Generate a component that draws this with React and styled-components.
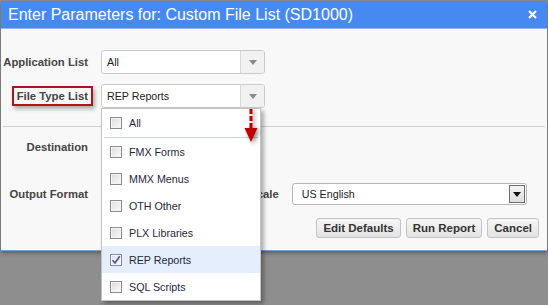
import React from 'react';
import styled, { createGlobalStyle } from 'styled-components';

const GlobalStyle = createGlobalStyle`
    html, body {
        margin: 0;
        padding: 0;
        background: #8e8e8e;
        height: 305px;
        overflow: hidden;
    }
    #root {
        padding: 1px;
        font-family: "Liberation Sans", Arial, sans-serif;
    }
`;

const Dialog = styled.div`
    width: 546px;
    background: #f8f8f8;
    border-bottom: 1px solid #7d9bd0;
    box-shadow: 0 2px 4px rgba(0, 0, 0, 0.35);
`;

const TitleBar = styled.div`
    display: flex;
    align-items: center;
    justify-content: space-between;
    height: 28px;
    padding: 0 10px 0 7px;
    background: #4689f0;
    border-bottom: 1px solid #8fb4f2;
    box-sizing: border-box;
`;

const Title = styled.span`
    color: #fff;
    font-size: 16px;
    line-height: 1;
`;

const Body = styled.div`
    padding-top: 21px;
    padding-bottom: 12px;
`;

const FieldGrid = styled.div`
    display: grid;
    grid-template-columns: 87px 1fr;
    column-gap: 13px;
    row-gap: ${p => p.$gap}px;
    grid-auto-rows: ${p => p.$row}px;
    align-items: center;
    padding-top: ${p => p.$top || 0}px;
`;

const Label = styled.div`
    justify-self: end;
    font-size: 11.3px;
    font-weight: bold;
    color: #454545;
    white-space: nowrap;
`;

const Marked = styled.span`
    display: inline-block;
    height: 16px;
    line-height: 16px;
    padding: 0 3px;
    margin-right: -5px;
    border: 2px solid #b3121c;
    box-shadow: 2px 3px 4px rgba(0, 0, 0, 0.3);
`;

const SelectWrap = styled.div`
    position: relative;
    width: ${p => p.$width}px;
    height: 24px;
`;

const SelectBox = styled.div`
    display: flex;
    height: 100%;
    box-sizing: border-box;
    border: 1px solid #cacaca;
    border-radius: 3px;
    background: #fff;
    overflow: hidden;
`;

const SelectText = styled.span`
    flex: 1;
    display: flex;
    align-items: center;
    padding-left: 5px;
    font-size: 10.7px;
    color: #222;
`;

const ArrowCell = styled.span`
    width: 23px;
    display: flex;
    align-items: center;
    justify-content: center;
    background: #f1f1f1;
    border-left: 1px solid #d8d8d8;
`;

const Caret = styled.span`
    width: 0;
    height: 0;
    border-left: 4px solid transparent;
    border-right: 4px solid transparent;
    border-top: 5px solid ${p => p.$color || '#8a8a8a'};
`;

const Menu = styled.div`
    position: absolute;
    top: 100%;
    left: 0;
    width: 160px;
    box-sizing: border-box;
    background: #fff;
    border: 1px solid #c4c4c4;
    box-shadow: 3px 3px 4px rgba(0, 0, 0, 0.3);
    z-index: 10;
`;

const MenuItem = styled.div`
    display: flex;
    align-items: center;
    gap: 7px;
    height: ${p => p.$h || 27}px;
    padding-left: 8px;
    background: ${p => (p.$active ? '#e4eefc' : 'transparent')};
    font-size: 10.7px;
    color: #1f2740;
`;

const MenuRule = styled.div`
    height: 1px;
    margin: 0 2px;
    background: #c9d0da;
`;

const Check = styled.span`
    width: 12px;
    height: 12px;
    box-sizing: border-box;
    border: 1px solid #8d8d8d;
    background: linear-gradient(135deg, #dcdcdc, #fbfbfb);
    box-shadow: inset 0 0 0 1px #f4f4f4;
    display: flex;
    align-items: center;
    justify-content: center;
`;

const ArrowMark = styled.svg`
    position: absolute;
    left: 142px;
    top: 0;
    filter: drop-shadow(2px 2px 2px rgba(0, 0, 0, 0.45));
`;

const Rule = styled.div`
    height: 1px;
    margin: 18px 2px 0;
    background: #cfcfcf;
`;

const InlineRow = styled.div`
    display: flex;
    align-items: center;
    height: 22px;
`;

const Spacer = styled.div`
    width: ${p => p.$width}px;
`;

const LocaleLabel = styled(Label)`
    margin: 0 13px 0 14px;
`;

const ClassicSelect = styled.div`
    display: flex;
    align-items: center;
    justify-content: space-between;
    width: 235px;
    height: 22px;
    box-sizing: border-box;
    padding: 1px 1px 1px 9px;
    border: 1px solid #b8b8b8;
    border-radius: 3px;
    background: #fff;
    font-size: 10.7px;
    color: #222;
`;

const ClassicButton = styled.span`
    width: 16px;
    height: 18px;
    box-sizing: border-box;
    border: 1px solid #6b6b6b;
    background: linear-gradient(#f4f4f4, #dedede);
    display: flex;
    align-items: center;
    justify-content: center;
`;

const Actions = styled.div`
    display: flex;
    justify-content: flex-end;
    gap: 5px;
    margin-top: 13px;
    padding-right: 8px;
`;

const Button = styled.button`
    height: 20px;
    padding: 0 6px;
    border: 1px solid #c3c3c3;
    border-radius: 3px;
    background: linear-gradient(#f6f6f6, #e3e3e3);
    font-family: "Liberation Sans", Arial, sans-serif;
    font-size: 11.5px;
    font-weight: bold;
    color: #333;
`;

const fileTypes = [
    { label: 'FMX Forms' },
    { label: 'MMX Menus' },
    { label: 'OTH Other' },
    { label: 'PLX Libraries' },
    { label: 'REP Reports', checked: true },
    { label: 'SQL Scripts' },
];

const Tick = () => (
    <svg width="10" height="10" viewBox="0 0 10 10">
        <path d="M1.5 5.2 L4 8 L8.8 1.2" fill="none" stroke="#3a56b0" strokeWidth="1.6" />
    </svg>
);

const App = () => {
    return (
        <>
            <GlobalStyle />
            <Dialog>
                <TitleBar>
                    <Title>Enter Parameters for: Custom File List (SD1000)</Title>
                    <svg width="9" height="9" viewBox="0 0 9 9">
                        <path d="M1 1 L8 8 M8 1 L1 8" stroke="#fff" strokeWidth="2.2" />
                    </svg>
                </TitleBar>
                <Body>
                    <FieldGrid $row={24} $gap={10}>
                        <Label>Application List</Label>
                        <SelectWrap $width={164}>
                            <SelectBox>
                                <SelectText>All</SelectText>
                                <ArrowCell><Caret /></ArrowCell>
                            </SelectBox>
                        </SelectWrap>
                        <Label><Marked>File Type List</Marked></Label>
                        <SelectWrap $width={164}>
                            <SelectBox>
                                <SelectText>REP Reports</SelectText>
                                <ArrowCell><Caret /></ArrowCell>
                            </SelectBox>
                            <Menu>
                                <MenuItem $h={28}><Check />All</MenuItem>
                                <MenuRule />
                                {fileTypes.map(t => (
                                    <MenuItem key={t.label} $active={t.checked}>
                                        <Check>{t.checked ? <Tick /> : null}</Check>
                                        {t.label}
                                    </MenuItem>
                                ))}
                                <ArrowMark width="14" height="34" viewBox="0 0 14 34">
                                    <path d="M7 0 V20" stroke="#c00000" strokeWidth="3" strokeDasharray="5 2" />
                                    <path d="M0.5 19 H13.5 L7 33 Z" fill="#c00000" />
                                </ArrowMark>
                            </Menu>
                        </SelectWrap>
                    </FieldGrid>
                    <Rule />
                    <FieldGrid $row={22} $gap={25} $top={9}>
                        <Label>Destination</Label>
                        <div />
                        <Label>Output Format</Label>
                        <InlineRow>
                            <Spacer $width={128} />
                            <LocaleLabel>Locale</LocaleLabel>
                            <ClassicSelect>
                                US English
                                <ClassicButton><Caret $color="#111" /></ClassicButton>
                            </ClassicSelect>
                        </InlineRow>
                    </FieldGrid>
                    <Actions>
                        <Button>Edit Defaults</Button>
                        <Button>Run Report</Button>
                        <Button>Cancel</Button>
                    </Actions>
                </Body>
            </Dialog>
        </>
    );
};

export default App;
